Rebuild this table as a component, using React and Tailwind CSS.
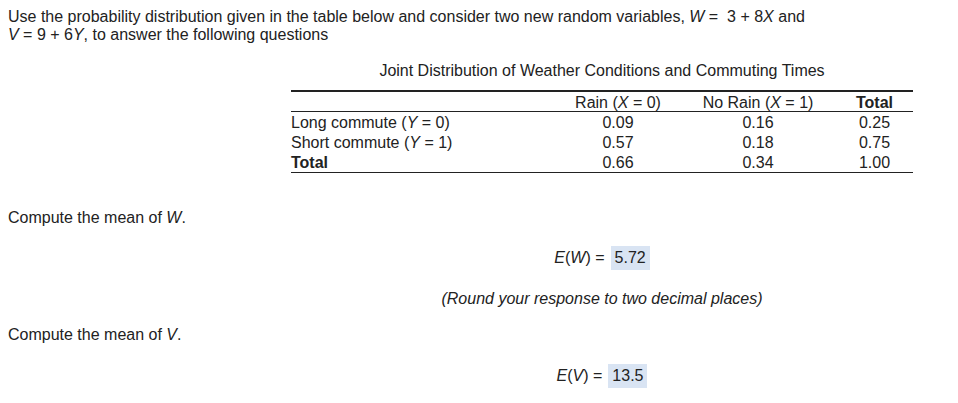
import React from 'react';

const rows = [
    { label: 'Long commute', y: '0', rain: '0.09', noRain: '0.16', total: '0.25' },
    { label: 'Short commute', y: '1', rain: '0.57', noRain: '0.18', total: '0.75' },
];

const Answer = ({ name, value }) => (
    <div className="flex items-center justify-center h-[24px]">
        <span><i>E</i>(<i>{name}</i>) =</span>
        <span className="ml-[6px] px-[4px] h-[24px] leading-[24px] bg-[#d9e4f3]">{value}</span>
    </div>
);

const App = () => {
    return (
        <div className="bg-white w-[958px] h-[403px] overflow-hidden text-[16px] leading-[18px] text-[#222] pt-[8px] pl-[8px]" style={{ fontFamily: '"Liberation Sans", Arial, sans-serif' }}>
            <p>
                Use the probability distribution given in the table below and consider two new random variables, <i>W</i> = &nbsp;3 + 8<i>X</i> and
                <br />
                <i>V</i> = 9 + 6<i>Y</i>, to answer the following questions
            </p>

            <div className="ml-[283px] w-[622px]">
                <div className="mt-[18px] text-center">Joint Distribution of Weather Conditions and Commuting Times</div>
                <div className="mt-[10px] border-t-2 border-b border-[#222]">
                    <div className="flex h-[20px] pt-[2px] items-center border-b border-[#222]">
                        <div className="w-[265px]"></div>
                        <div className="w-[124px] text-center">Rain (<i>X</i> = 0)</div>
                        <div className="w-[156px] text-center">No Rain (<i>X</i> = 1)</div>
                        <div className="w-[77px] text-center font-bold">Total</div>
                    </div>
                    {rows.map((r) => (
                        <div key={r.label} className="flex h-[20px] pt-[2px] items-center">
                            <div className="w-[265px]">{r.label} (<i>Y</i> = {r.y})</div>
                            <div className="w-[124px] text-center">{r.rain}</div>
                            <div className="w-[156px] text-center">{r.noRain}</div>
                            <div className="w-[77px] text-center">{r.total}</div>
                        </div>
                    ))}
                    <div className="flex h-[20px] pt-[2px] items-center">
                        <div className="w-[265px] font-bold">Total</div>
                        <div className="w-[124px] text-center">0.66</div>
                        <div className="w-[156px] text-center">0.34</div>
                        <div className="w-[77px] text-center">1.00</div>
                    </div>
                </div>
            </div>

            <p className="mt-[36px]">Compute the mean of <i>W</i>.</p>
            <div className="ml-[283px] w-[622px]">
                <div className="mt-[19px]"><Answer name="W" value="5.72" /></div>
                <div className="mt-[20px] text-center italic">(Round your response to two decimal places)</div>
            </div>

            <p className="mt-[18px]">Compute the mean of <i>V</i>.</p>
            <div className="ml-[283px] w-[622px]">
                <div className="mt-[20px]"><Answer name="V" value="13.5" /></div>
            </div>
        </div>
    );
};

export default App;
